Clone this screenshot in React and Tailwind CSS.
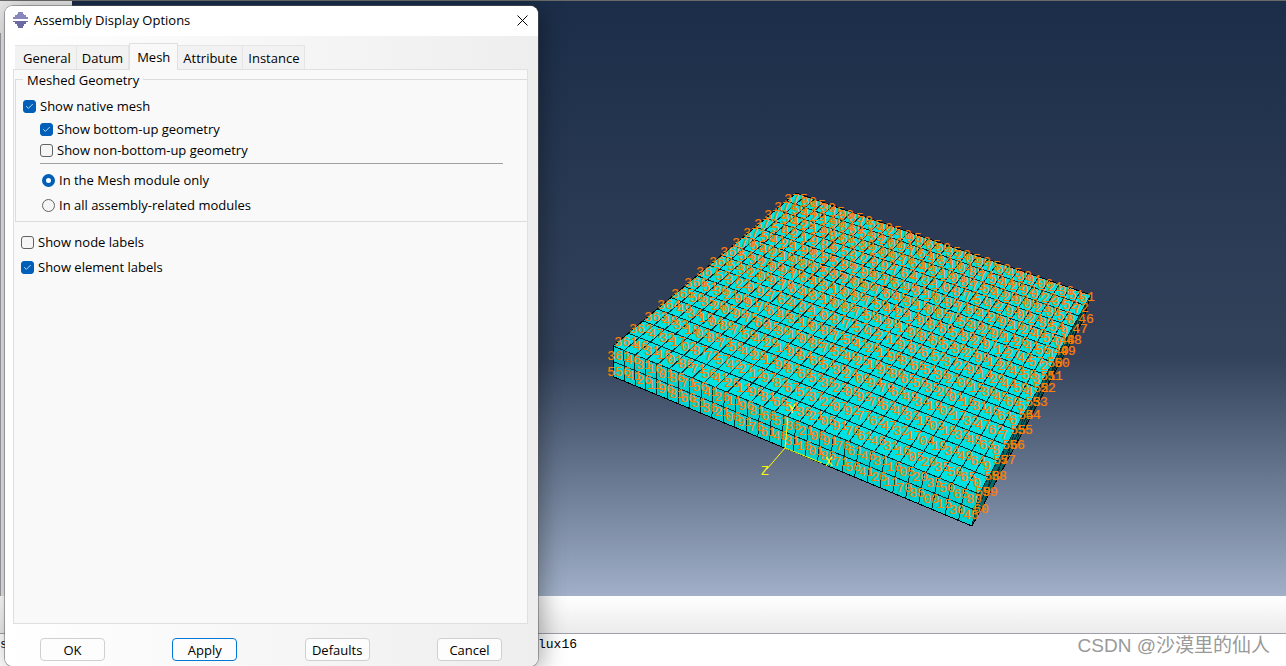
import React, { useState } from 'react'
import { Check } from 'lucide-react'

const COLS = 30
const ROWS = 15

// corners of the plate as seen in the viewport
const A = [796, 193]
const B = [1091, 295]
const C = [979, 494]
const D = [613, 346]
const B2 = [1083, 320]
const C2 = [972, 526]
const D2 = [614, 377]

// projective map from the unit square to a quad
function quad(p0, p1, p2, p3) {
	const dx1 = p1[0] - p2[0]
	const dx2 = p3[0] - p2[0]
	const dy1 = p1[1] - p2[1]
	const dy2 = p3[1] - p2[1]
	const sx = p0[0] - p1[0] + p2[0] - p3[0]
	const sy = p0[1] - p1[1] + p2[1] - p3[1]
	const det = dx1 * dy2 - dx2 * dy1
	const g = (sx * dy2 - dx2 * sy) / det
	const h = (dx1 * sy - sx * dy1) / det
	const a = p1[0] - p0[0] + g * p1[0]
	const b = p3[0] - p0[0] + h * p3[0]
	const d = p1[1] - p0[1] + g * p1[1]
	const e = p3[1] - p0[1] + h * p3[1]
	return (u, v) => {
		const w = g * u + h * v + 1
		return [(a * u + b * v + p0[0]) / w, (d * u + e * v + p0[1]) / w]
	}
}

const top = quad(D, C, B, A)
const front = quad(D, C, C2, D2)
const side = quad(C, B, B2, C2)

function gridPath(map, nu, nv) {
	let d = ''
	for (let i = 0; i <= nu; i++) {
		const [x1, y1] = map(i / nu, 0)
		const [x2, y2] = map(i / nu, 1)
		d += `M${x1} ${y1}L${x2} ${y2}`
	}
	for (let j = 0; j <= nv; j++) {
		const [x1, y1] = map(0, j / nv)
		const [x2, y2] = map(1, j / nv)
		d += `M${x1} ${y1}L${x2} ${y2}`
	}
	return d
}

function elementNumber(i, j) {
	return i < 24 ? 361 - 15 * i + j : 405 + 15 * (i - 24) - j
}

function buildLabels() {
	const out = []
	for (let j = ROWS - 1; j >= 0; j--) {
		for (let i = 0; i < COLS; i++) {
			const [x, y] = top((i + 0.5) / COLS, (j + 0.5) / ROWS)
			const n = String(elementNumber(i, j))
			const last = i === COLS - 1
			out.push({ x: i && !last ? x + 4 : x, y, n: last ? n.slice(-1) : i ? n.slice(-2) : n })
		}
	}
	for (let k = 0; k < 2; k++) {
		for (let i = 0; i < COLS; i++) {
			const [x, y] = front((i + 0.5) / COLS, (k + 0.5) / 2)
			const n = String(k ? (i < 24 ? 556 - 15 * i : 870 + 15 * (i - 24)) : elementNumber(i, 0))
			out.push({ x: i ? x + 4 : x, y, n: i ? n.slice(-2) : n })
		}
	}
	// right edge, front to back
	for (let j = 0; j < ROWS; j++) {
		const t = j / (ROWS - 1)
		const w = t * (1 + 0.26 * (1 - t))
		const x = 981 + 105 * w
		const y = 509 - 190 * w
		const n = String(60 - j)
		if (j > 0 && j < ROWS - 2) out.push({ x: x - 7, y, n })
		out.push({ x, y, n })
	}
	out.push({ x: 1091, y: 297, n: '1' }, { x: 1085, y: 308, n: '2' })
	return out
}

const labels = buildLabels()
const pts = (...p) => p.map((q) => q.join(',')).join(' ')

function Plate() {
	return (
		<svg className="block" width="1286" height="595" viewBox="0 1 1286 595" fill="none">
			<polygon points={pts(C, B, B2, C2)} fill="#006a6a" />
			<polygon points={pts(A, B, C, D)} fill="#00e1e1" />
			<polygon points={pts(D, C, C2, D2)} fill="#00d2d2" />
			<g stroke="#002a2e" strokeWidth="1" shapeRendering="crispEdges">
				<path d={gridPath(top, COLS, ROWS)} />
				<path d={gridPath(front, COLS, 2)} />
				<path d={gridPath(side, ROWS, 2)} />
				<polyline points={pts(D, A, B, B2, C2, D2, D)} stroke="#000000" />
			</g>
			<g className="font-['Liberation_Mono',monospace] text-[13px]" fill="#ff8000" stroke="#ff8000" strokeWidth="0.2" textAnchor="middle">
				{labels.map((l, k) => (
					<text key={k} x={Math.round(l.x)} y={Math.round(l.y) + 4}>
						{l.n}
					</text>
				))}
			</g>
			<path d="M785 448L788 417M785 448L767 469M785 448L822 463" stroke="#ffff00" />
			<g className="font-['Liberation_Mono',monospace] text-[13px]" fill="#ffff00" textAnchor="middle">
				<text x="792" y="413">Y</text>
				<text x="829" y="466">X</text>
				<text x="765" y="475">Z</text>
			</g>
		</svg>
	)
}

function AppIcon() {
	return (
		<svg width="15" height="16" viewBox="0 0 15 16">
			<path d="M5 0h5v2h1v1h2v2h2v2H0V5h2V3h2V2h1z" fill="#8886bb" />
			<path d="M0 9h15v1h-2v2h-2v2h-1v2H5v-2H4v-2H2v-2H0z" fill="#6c6aa5" />
		</svg>
	)
}

function CheckRow({ id, label, initial, className }) {
	const [on, setOn] = useState(initial)
	return (
		<div className={`flex items-center gap-1 ${className}`}>
			<span className="grid">
				<input
					id={id}
					type="checkbox"
					checked={on}
					onChange={() => setOn(!on)}
					className="col-start-1 row-start-1 size-[13px] appearance-none rounded-[3px] border border-[#626262] bg-[#f5f5f5] checked:border-[#005fb8] checked:bg-[#005fb8]"
				/>
				{on && <Check className="pointer-events-none col-start-1 row-start-1 size-[9px] place-self-center text-white" strokeWidth={2} />}
			</span>
			<label htmlFor={id}>{label}</label>
		</div>
	)
}

function RadioRow({ id, label, checked, onChange, className }) {
	return (
		<div className={`flex items-center gap-1 ${className}`}>
			<input
				id={id}
				type="radio"
				name="scope"
				checked={checked}
				onChange={onChange}
				className="size-[13px] appearance-none rounded-full border border-[#626262] bg-[#f5f5f5] checked:border-4 checked:border-[#005fb8] checked:bg-white"
			/>
			<label htmlFor={id}>{label}</label>
		</div>
	)
}

const tabs = ['General', 'Datum', 'Mesh', 'Attribute', 'Instance']
const actions = ['OK', 'Apply', 'Defaults', 'Cancel']

function DisplayOptions() {
	const [tab, setTab] = useState('Mesh')
	const [scope, setScope] = useState('mesh')

	return (
		<section className="absolute top-1.5 bottom-0 left-[5px] z-20 flex w-[533px] flex-col overflow-hidden rounded-lg bg-linear-to-r from-white to-[#eeeeee] font-['Open_Sans',sans-serif] text-[13px] leading-4 text-black shadow-[0_0_0_1px_rgba(90,90,90,0.5),4px_4px_24px_rgba(0,0,0,0.35)]">
			<header className="flex h-[30px] items-center gap-1.5 bg-white px-2 pb-0.5">
				<AppIcon />
				<h1 className="grow">Assembly Display Options</h1>
				<button aria-label="Close">
					<svg width="15" height="15" viewBox="0 0 15 15" fill="none" stroke="#000000">
						<path d="M2.5 2.5l10 10M12.5 2.5l-10 10" />
					</svg>
				</button>
			</header>
			<nav className="mt-[7px] ml-2.5 flex items-end">
				{tabs.map((t) => (
					<button
						key={t}
						onClick={() => setTab(t)}
						className={
							t === tab
								? 'relative -mb-px h-[27px] border border-b-0 border-[#e0e0e0] bg-[#f9f9f9] px-[7px] pb-px'
								: 'h-6 border-t border-r border-[#e5e5e5] bg-[#f2f2f2] px-[5px] first:pl-2'
						}
					>
						{t}
					</button>
				))}
			</nav>
			<div className="mr-2.5 ml-2 grow border border-[#e0e0e0] bg-[#f9f9f9]">
				<fieldset className="ml-px border border-r-0 border-[#dcdcdc] pb-2 pl-[7px]">
					<legend className="px-1 pt-0.5">Meshed Geometry</legend>
					<CheckRow id="native" label="Show native mesh" initial className="mt-2.5" />
					<div className="mr-6 ml-[17px]">
						<CheckRow id="bottom" label="Show bottom-up geometry" initial className="mt-[7px]" />
						<CheckRow id="nonbottom" label="Show non-bottom-up geometry" initial={false} className="mt-[5px]" />
						<hr className="mt-[5px] border-[#a0a0a0]" />
						<RadioRow id="mesh" label="In the Mesh module only" checked={scope === 'mesh'} onChange={() => setScope('mesh')} className="mt-2 ml-0.5" />
						<RadioRow id="all" label="In all assembly-related modules" checked={scope === 'all'} onChange={() => setScope('all')} className="mt-[9px] ml-0.5" />
					</div>
				</fieldset>
				<CheckRow id="nodes" label="Show node labels" initial={false} className="mt-3 ml-[7px]" />
				<CheckRow id="elements" label="Show element labels" initial className="mt-[9px] ml-[7px]" />
			</div>
			<footer className="mt-3.5 mb-[5px] flex justify-between pr-9 pl-[35px]">
				{actions.map((a) => (
					<button
						key={a}
						className={`h-[23px] w-[65px] rounded border bg-[#fdfdfd] ${a === 'Apply' ? 'border-[#0078d4]' : 'border-[#d0d0d0]'}`}
					>
						{a}
					</button>
				))}
			</footer>
		</section>
	)
}

export default function App() {
	return (
		<div className="relative flex h-screen flex-col overflow-hidden bg-white">
			<main className="grid grow overflow-hidden border-t border-[#6a6a66] bg-linear-to-b from-[#1b2d48] via-[#34435c] via-60% to-[#a1b0c8]">
				<aside className="z-10 col-start-1 row-start-1 w-[72px] bg-[#e6e6e6] pt-8">
					<div className="h-full w-px bg-[#9a9aa2]" />
				</aside>
				<div className="col-start-1 row-start-1">
					<Plate />
				</div>
			</main>
			<div className="h-[37px] bg-linear-to-b from-white to-[#ebebeb]" />
			<div className="flex h-[33px] items-start border-t border-[#a0a0ac] bg-white font-['Liberation_Mono',monospace] text-[13px] leading-4">
				<code className="w-[538px] pt-[3px]">s</code>
				<code className="grow pt-[3px]">lux16</code>
				<span className="pr-4 font-['Liberation_Sans','Noto_Sans_CJK_SC',sans-serif] text-[19px] leading-6 text-[#999999]">CSDN @沙漠里的仙人</span>
			</div>
			<DisplayOptions />
		</div>
	)
}
